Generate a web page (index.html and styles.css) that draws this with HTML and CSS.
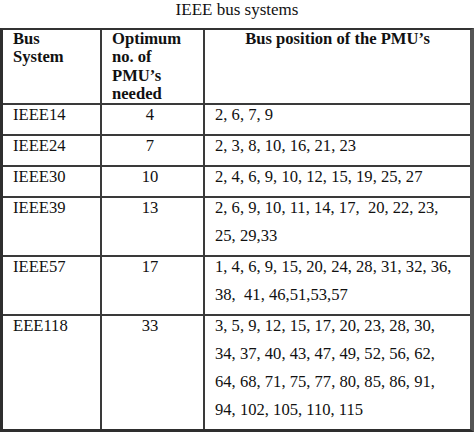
FILE: index.html
```html
<!DOCTYPE html>
<html>
<head>
<meta charset="utf-8">
<link rel="stylesheet" href="styles.css">
</head>
<body>
<div class="title">IEEE bus systems</div>
<table class="pmu">
  <thead>
    <tr>
      <th class="c1">Bus<br>System</th>
      <th class="c2">Optimum<br>no. of<br>PMU’s<br>needed</th>
      <th class="c3">Bus position of the PMU’s</th>
    </tr>
  </thead>
  <tbody>
    <tr>
      <td class="c1"><div class="in">IEEE14</div></td>
      <td class="c2 num"><div class="in">4</div></td>
      <td class="c3"><div class="in">2, 6, 7, 9</div></td>
    </tr>
    <tr>
      <td class="c1"><div class="in">IEEE24</div></td>
      <td class="c2 num"><div class="in">7</div></td>
      <td class="c3"><div class="in">2, 3, 8, 10, 16, 21, 23</div></td>
    </tr>
    <tr>
      <td class="c1"><div class="in">IEEE30</div></td>
      <td class="c2 num"><div class="in">10</div></td>
      <td class="c3"><div class="in">2, 4, 6, 9, 10, 12, 15, 19, 25, 27</div></td>
    </tr>
    <tr>
      <td class="c1"><div class="in">IEEE39</div></td>
      <td class="c2 num"><div class="in">13</div></td>
      <td class="c3"><div class="in">2, 6, 9, 10, 11, 14, 17,&nbsp; 20, 22, 23,<br>25, 29,33</div></td>
    </tr>
    <tr>
      <td class="c1"><div class="in">IEEE57</div></td>
      <td class="c2 num"><div class="in">17</div></td>
      <td class="c3"><div class="in">1, 4, 6, 9, 15, 20, 24, 28, 31, 32, 36,<br>38,&nbsp; 41, 46,51,53,57</div></td>
    </tr>
    <tr class="last">
      <td class="c1"><div class="in">EEE118</div></td>
      <td class="c2 num"><div class="in">33</div></td>
      <td class="c3"><div class="in">3, 5, 9, 12, 15, 17, 20, 23, 28, 30,<br>34, 37, 40, 43, 47, 49, 52, 56, 62,<br>64, 68, 71, 75, 77, 80, 85, 86, 91,<br>94, 102, 105, 110, 115</div></td>
    </tr>
  </tbody>
</table>
</body>
</html>
```
FILE: styles.css
```css
html, body {
  margin: 0;
  padding: 0;
  background: #ffffff;
}
body {
  width: 474px;
  font-family: "Liberation Serif", "Times New Roman", serif;
  color: #111111;
}
.title {
  height: 28px;
  line-height: 20px;
  font-size: 17px;
  text-align: center;
}
.pmu {
  width: 474px;
  table-layout: fixed;
  border-collapse: separate;
  border-spacing: 0;
  border-style: solid;
  border-color: #333333 #555555 #2e2e2e #2e2e2e;
  border-width: 2px 4px 3px 3px;
  font-size: 16.6px;
}
.pmu th, .pmu td {
  box-sizing: border-box;
  padding: 0 10px;
  vertical-align: top;
  border-right: 2px solid #3a3a3a;
  border-bottom: 2px solid #3a3a3a;
  text-align: left;
}
.pmu .c3 {
  border-right: none;
}
.pmu tr.last td {
  border-bottom: none;
}
.pmu th {
  font-weight: bold;
  line-height: 18.3px;
  height: 75px;
}
.pmu th.c1 { width: 99px; }
.pmu th.c2 { width: 103px; }
.pmu th.c3 { text-align: center; }
.pmu td {
  line-height: 28px;
  padding-bottom: 5px;
}
.pmu td.num {
  text-align: center;
  padding-left: 6px;
  padding-right: 11px;
}
.in {
  margin-top: -4px;
}
```
